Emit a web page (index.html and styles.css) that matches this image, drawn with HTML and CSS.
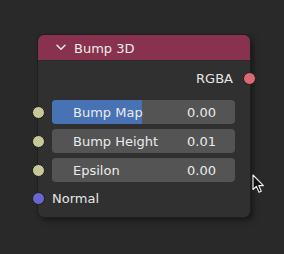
FILE: index.html
```html
<!DOCTYPE html>
<html>
<head>
<meta charset="utf-8">
<link rel="stylesheet" href="styles.css">
</head>
<body>
<div class="canvas">
  <div class="node">
    <div class="header">
      <svg class="chevron" width="10" height="7" viewBox="0 0 10 7"><path d="M1 1.2 L5 5.2 L9 1.2" fill="none" stroke="#e8e8e8" stroke-width="1.5" stroke-linecap="round" stroke-linejoin="round"/></svg>
      <span class="title">Bump 3D</span>
    </div>
    <div class="body">
      <div class="row out">
        <span class="label">RGBA</span>
        <span class="socket sock-right rgba"></span>
      </div>
      <div class="fields">
        <div class="field">
          <span class="socket sock-left float"></span>
          <div class="fill" style="width:49%"></div>
          <span class="flabel">Bump Map</span>
          <span class="fval">0.00</span>
        </div>
        <div class="field">
          <span class="socket sock-left float"></span>
          <span class="flabel">Bump Height</span>
          <span class="fval">0.01</span>
        </div>
        <div class="field">
          <span class="socket sock-left float"></span>
          <span class="flabel">Epsilon</span>
          <span class="fval">0.00</span>
        </div>
      </div>
      <div class="row in">
        <span class="socket sock-left vector"></span>
        <span class="label">Normal</span>
      </div>
    </div>
  </div>
  <svg class="cursor" width="14" height="20" viewBox="0 0 14 20"><path d="M1 1 L1 15.5 L4.4 12.4 L7 18.2 L9.3 17.2 L6.8 11.6 L11.4 11.6 Z" fill="#111" stroke="#f0f0f0" stroke-width="1.1" stroke-linejoin="round"/></svg>
</div>
</body>
</html>
```
FILE: styles.css
```css
html, body {
  margin: 0;
  padding: 0;
  background: #292929;
}
.canvas {
  position: relative;
  width: 284px;
  height: 254px;
  padding: 35px 0 0 38px;
  box-sizing: border-box;
  font-family: "DejaVu Sans", sans-serif;
  font-size: 13px;
  color: #e6e6e6;
}
.node {
  width: 212px;
  height: 182px;
  background: #303030;
  border-radius: 6px;
  box-shadow: 0 0 0 1px #1f1f1f, 3px 3px 6px rgba(0,0,0,0.5);
  display: flex;
  flex-direction: column;
}
.header {
  height: 26px;
  background: #88324f;
  border-radius: 6px 6px 0 0;
  display: flex;
  align-items: center;
  padding-left: 18px;
  gap: 8px;
  box-shadow: inset 0 -1px 0 #2a2a2a;
}
.chevron { display: block; margin-top: -2px; }
.title { color: #ebebeb; }
.body {
  padding: 5px 15px 0 14px;
  display: flex;
  flex-direction: column;
}
.row {
  position: relative;
  height: 24px;
  display: flex;
  align-items: center;
}
.row.out { justify-content: flex-end; padding-right: 2px; }
.row.in { margin-top: 4px; }
.fields {
  margin-top: 10px;
  display: flex;
  flex-direction: column;
  gap: 5px;
}
.field {
  position: relative;
  height: 24px;
  background: #545454;
  border-radius: 4px;
  display: flex;
  align-items: center;
  justify-content: space-between;
  padding: 0 19px 0 21px;
}
.fill {
  position: absolute;
  left: 0;
  top: 0;
  bottom: 0;
  background: #4772b3;
  border-radius: 4px 0 0 4px;
}
.flabel, .fval { position: relative; color: #ebebeb; }
.socket {
  position: absolute;
  width: 11px;
  height: 11px;
  border-radius: 50%;
  border: 1px solid #1c1c1c;
  top: 50%;
  margin-top: -6.5px;
}
.field .sock-left { left: -20px; }
.row.in .sock-left { left: -20px; }
.sock-right { right: -21px; }
.float { background: #c7c79a; }
.rgba { background: #da6a70; }
.vector { background: #6767d0; }
.cursor {
  position: absolute;
  left: 252px;
  top: 174px;
}
```
